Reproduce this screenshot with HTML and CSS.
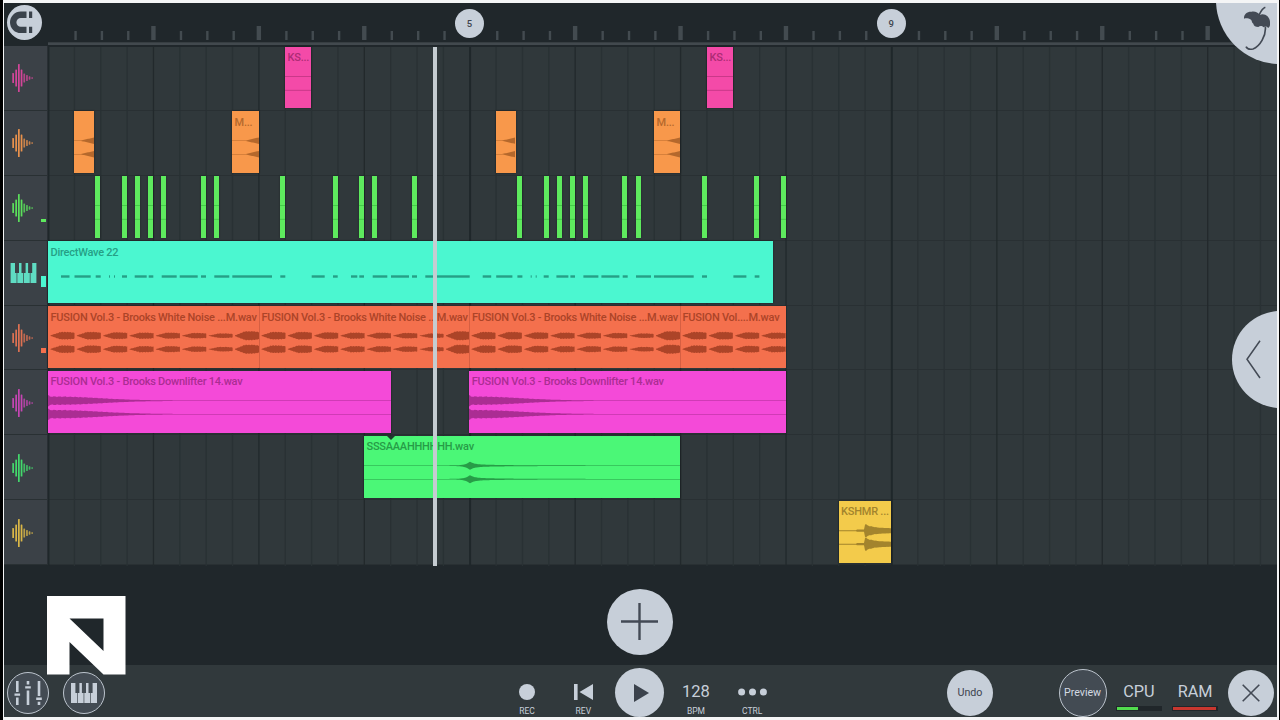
FILE: index.html
```html
<!DOCTYPE html>
<html lang="en">
<head>
    <meta charset="UTF-8">
    <meta name="viewport" content="width=device-width, initial-scale=1.0">
    <title>Playlist</title>
    <link rel="stylesheet" href="styles.css">
</head>
<body>
    <div class="app">
        <header class="ruler">
            <button class="round magnet">
                <svg width="35" height="35" viewBox="0 0 35 35">
                    <path d="M19.500 9.700H13.800A7.600 7.600 0 0 0 13.800 24.900H19.500" fill="none" stroke="#3a424b" stroke-width="6.400"/>
                    <path d="M22 6.500h3.200v6.400H22zM22 21.700h3.200v6.400H22z" fill="#3a424b"/>
                </svg>
            </button>
            <div class="timeline">
                <svg id="ticks" class="ticks"></svg>
                <span class="bar-number" style="left: 421.500px">5</span>
                <span class="bar-number" style="left: 843.300px">9</span>
            </div>
        </header>

        <main class="tracks" id="tracks">
            <svg id="grid" class="grid"></svg>
        </main>

        <section class="add-area">
            <button class="round add">
                <svg width="37" height="37" viewBox="0 0 37 37"><path d="M18.500 0v37M0 18.500h37" stroke="#434a55" stroke-width="2.400"/></svg>
            </button>
        </section>

        <footer class="toolbar">
            <div class="group left">
                <div class="cell">
                    <button class="round outline">
                        <svg width="28" height="26" viewBox="0 0 28 26" fill="#c7cfd9">
                            <path d="M2 1h2.600v11H2zM2 17.500h2.600V25H2zM.5 13.500h5.600v2.300H.5z"/>
                            <path d="M12.700 1h2.600v3.500h-2.600zM12.700 10.500h2.600V25h-2.600zM11.200 6.300h5.600v2.300h-5.600z"/>
                            <path d="M23.700 1h2.600v15h-2.600zM23.700 21.800h2.600V25h-2.600zM22.200 17.600h5.600v2.300h-5.600z"/>
                        </svg>
                    </button>
                </div>
                <div class="cell">
                    <button class="round outline">
                        <svg width="26" height="20" viewBox="0 0 26 20" fill="#c7cfd9"><path d="M0 0H4.400V10H6V20H0zM8.400 0H10.900V10H12.600V20H6.700V10H8.400zM15 0H17.500V10H19.200V20H13.300V10H15zM21.600 0H26V20H19.900V10H21.600z"/></svg>
                    </button>
                </div>
            </div>
            <div class="group center">
                <div class="cell labeled">
                    <div class="glyph"><svg width="16" height="16"><circle cx="8" cy="8" r="8" fill="#c7cfd9"/></svg></div>
                    <span>REC</span>
                </div>
                <div class="cell labeled">
                    <div class="glyph"><svg width="19" height="16" viewBox="0 0 19 16"><path d="M0 0h3.600v16H0zM19 0v16L5.500 8z" fill="#c7cfd9"/></svg></div>
                    <span>REV</span>
                </div>
                <div class="cell">
                    <button class="round play">
                        <svg width="15" height="18" viewBox="0 0 15 18"><path d="M0 0l15 9L0 18z" fill="#3b424c"/></svg>
                    </button>
                </div>
                <div class="cell labeled">
                    <div class="glyph tempo">128</div>
                    <span>BPM</span>
                </div>
                <div class="cell labeled">
                    <div class="glyph"><svg width="29" height="8" fill="#c7cfd9"><circle cx="3.600" cy="4" r="3.500"/><circle cx="14.500" cy="4" r="3.500"/><circle cx="25.400" cy="4" r="3.500"/></svg></div>
                    <span>CTRL</span>
                </div>
            </div>
            <div class="group right">
                <div class="cell"><button class="round undo">Undo</button></div>
                <div class="cell"></div>
                <div class="cell"><button class="round outline preview">Preview</button></div>
                <div class="cell load"><span>CPU</span><div class="meter cpu"><i></i></div></div>
                <div class="cell load"><span>RAM</span><div class="meter ram"><i></i></div></div>
                <div class="cell">
                    <button class="round close">
                        <svg width="18" height="18" viewBox="0 0 18 18"><path d="M.7 .7l16.600 16.600M17.300 .7L.7 17.300" stroke="#434a55" stroke-width="1.600"/></svg>
                    </button>
                </div>
            </div>
        </footer>

        <div class="corner">
            <svg width="27" height="45" viewBox="0 0 81 135">
                <path d="M3 38C2 25 12 16 26 17C36 15 46 20 50 27C64 20 82 32 81 50C82 58 80 63 76 66C72 60 65 60 62 64C56 58 50 60 46 63C38 62 32 60 31 53C25 50 28 44 24 41C16 36 8 36 3 38z" fill="#434a55"/>
                <path d="M48 27C54 15 58 7 67 4M67 62C70 90 50 122 30 129C20 131 12 129 9 122" fill="none" stroke="#434a55" stroke-width="5"/>
            </svg>
        </div>
        <div class="side-tab">
            <svg width="15" height="39" viewBox="0 0 15 39"><path d="M14 .7L1 19.300L14 38" fill="none" stroke="#434a55" stroke-width="1.500"/></svg>
        </div>
        <svg class="logo" width="79" height="79" viewBox="0 0 79 79">
            <path fill="#fff" fill-rule="evenodd" d="M0 0H78.500V78.500H56.500L22.500 46V78.500H0zM22.500 22.500H56.500V55z"/>
        </svg>
    </div>

    <script src="script.js"></script>
</body>
</html>
```
FILE: styles.css
```css
body {
    margin: 0;
    height: 720px;
    box-sizing: border-box;
    border-left: 3px solid #000;
    border-right: 1px solid #000;
    background-color: #f4f5f6;
    font-family: Roboto, "Liberation Sans", sans-serif;
    overflow: hidden;
}

.app {
    position: relative;
    width: 1273px;
    height: 714px;
    margin: 3px 0 0 1px;
    background-color: #20272b;
    display: flex;
    flex-direction: column;
    overflow: hidden;
}

.round {
    display: flex;
    align-items: center;
    justify-content: center;
    flex: none;
    padding: 0;
    border: 0;
    border-radius: 50%;
    box-sizing: border-box;
    background-color: #c7cfd9;
    color: #3d444e;
    font-family: inherit;
}

/* Ruler */
.ruler {
    display: flex;
    height: 43px;
    flex: none;
}

.magnet {
    width: 35px;
    height: 35px;
    margin: 2px 6px 0 3px;
}

.timeline {
    position: relative;
    flex: 1;
}

.ticks {
    display: block;
    width: 100%;
    height: 43px;
}

.bar-number {
    position: absolute;
    top: 6px;
    width: 29px;
    height: 29px;
    margin-left: -14.5px;
    border-radius: 50%;
    background-color: #c7cfd9;
    color: #3d444e;
    font-size: 9.5px;
    font-weight: 500;
    line-height: 29px;
    text-align: center;
}

/* Tracks */
.tracks {
    position: relative;
    flex: none;
    background-color: #30383b;
    box-shadow: inset 0 1px #20272b;
}

.grid {
    position: absolute;
    left: 44px;
    top: 1px;
    width: 1229px;
    height: 519px;
}

.track {
    display: flex;
    height: 64.9px;
    box-sizing: border-box;
    border-bottom: 1px solid #293033;
}

.track-head {
    position: relative;
    width: 44px;
    flex: none;
    box-sizing: border-box;
    padding: 1px 0 0 6px;
    border-right: 1px solid #292f34;
    background-color: #3b4147;
    background-clip: padding-box;
    display: flex;
    align-items: center;
}

.level {
    position: absolute;
    right: 1px;
    width: 5px;
}

.lane {
    position: relative;
    flex: 1;
}

.clip {
    position: absolute;
    top: 0.55px;
    height: 61.8px;
    overflow: hidden;
    box-shadow: 0 0 2px rgba(0, 0, 0, 0.4);
}

.clip svg {
    position: absolute;
    left: 0;
    top: 0;
}

.clip-name {
    display: block;
    padding: 4.4px 0 0 2.5px;
    font-size: 11px;
    font-weight: 500;
    letter-spacing: -0.24px;
    line-height: 13px;
    white-space: nowrap;
}

.pink { background-color: #f44aa8; color: #ad2c75; }
.orange { background-color: #f8984b; color: #b5682c; }
.lime { background-color: #5eea5e; color: #35b93b; }
.teal { background-color: #4bf7d0; color: #269f86; }
.coral { background-color: #f4704d; color: #ac4428; }
.magenta { background-color: #f44ad8; color: #ab2d93; }
.green { background-color: #4bf777; color: #279c47; }
.yellow { background-color: #f3cb4b; color: #a3842d; }

.coral + .coral {
    box-shadow: inset 1px 0 #d65f42;
}

.playhead {
    position: absolute;
    left: 428.5px;
    top: 1px;
    width: 4px;
    height: 519px;
    background-color: #c5ccd1;
}

.marker {
    position: absolute;
    left: 382.5px;
    top: 389.5px;
    border: 4px solid transparent;
    border-top-color: #1d3a2c;
    border-bottom: 0;
}

/* Add button */
.add-area {
    flex: 1;
    display: flex;
    justify-content: center;
    align-items: flex-start;
    padding-top: 23.6px;
    padding-right: 2px;
}

.add {
    width: 66px;
    height: 66px;
}

/* Toolbar */
.toolbar {
    display: flex;
    flex: none;
    height: 52px;
    background-color: #31393c;
}

.group {
    display: flex;
    height: 55px;
}

.left {
    margin-left: -4px;
}

.center {
    margin-left: 386.3px;
}

.right {
    margin-left: auto;
    margin-right: -2.6px;
}

.cell {
    width: 56.3px;
    display: flex;
    align-items: center;
    justify-content: center;
    flex: none;
}

.outline {
    width: 42px;
    height: 42px;
    border: 1.5px solid #bcc4cd;
    background-color: #434b53;
}

.play {
    width: 49px;
    height: 49px;
}

.play svg {
    margin-left: 3px;
}

.undo,
.close {
    width: 46px;
    height: 46px;
    font-size: 10.7px;
}

.preview {
    width: 48px;
    height: 48px;
    color: #d3dae2;
    font-size: 10.6px;
}

.labeled {
    flex-direction: column;
    justify-content: flex-start;
    color: #c7cfd9;
    font-size: 8.5px;
    line-height: 10px;
}

.glyph {
    height: 30px;
    padding-top: 12px;
    margin-bottom: -1.2px;
    display: flex;
    align-items: center;
}

.tempo {
    font-size: 16.5px;
}

.load {
    flex-direction: column;
    justify-content: flex-start;
    color: #c7cfd9;
    font-size: 16.3px;
    line-height: 20px;
}

.load span {
    margin: 16.6px 0 4px;
}

.meter {
    width: 44px;
    height: 3px;
    border: 1px solid #20262a;
    background-color: #20262a;
}

.meter i {
    display: block;
    height: 3px;
}

.cpu i { width: 21px; background-color: #52dc4e; }
.ram i { width: 43px; background-color: #c8372f; }

/* Overlays on the right edge */
.corner {
    position: absolute;
    right: -67px;
    top: -67px;
    width: 128px;
    height: 128px;
    border-radius: 50%;
    background-color: #c7cfd9;
}

.corner svg {
    position: absolute;
    left: 27px;
    top: 70px;
}

.side-tab {
    position: absolute;
    right: -51.5px;
    top: 308px;
    width: 97px;
    height: 97px;
    border-radius: 50%;
    background-color: #c7cfd9;
}

.side-tab svg {
    position: absolute;
    left: 14px;
    top: 29px;
}

.logo {
    position: absolute;
    left: 43px;
    top: 593px;
}
```
FILE: script.js
```js
var BEAT = 26.356;
var LOOP = BEAT * 16;

// Everything below is in pixels from the start of the song
function withRepeat(list, end) {
    return list.concat(list.map(function(n) {
        return [n[0] + LOOP, n[1]];
    })).filter(function(n) { return n[0] < end; });
}

// One closed shape around each of the two channel lines
function stereo(width, envelope) {
    return [29.7, 43.2].map(function(mid) {
        var top = [], bottom = [];
        for (var x = 0; x <= width; x++) {
            var h = envelope(x);
            top.push(x + ',' + (mid - h).toFixed(2));
            bottom.unshift(x + ',' + (mid + h).toFixed(2));
        }
        return '<polygon points="' + top.concat(bottom).join(' ') + '"/>';
    }).join('');
}

function line() {
    return 0.3;
}

function rough(x) {
    return 0.82 + 0.18 * Math.sin(x * 1.9) * Math.cos(x * 0.7);
}

function downlifter(x) {
    if (x < 2) return 5.5;
    return Math.max(0.3, 3.2 * rough(x) * Math.exp(-Math.pow(x / 62, 2.6)) + 1.5 * Math.exp(-Math.pow(x / 100, 2)));
}

function scream(x) {
    var d = x - 105.5;
    return 0.3 + (d < 0 ? 3.6 * Math.exp(d / 4) : 2.9 * Math.exp(-d / 4) + 1.2 * Math.exp(-d / 30));
}

function crash(x) {
    if (x < 26) return x < 18 ? 0.5 : 1.1;
    return 2.4 + 5 * rough(x) * Math.exp(-(x - 26) / 8);
}

function swell(width) {
    return function(x) {
        return x < width - 13 ? 0.3 : 0.3 + (x - width + 13) * 0.23;
    };
}

// White noise swells, one per beat
function blobs() {
    var sizes = [4, 4, 3.6, 3.3, 3.2, 2.9, 2.4, 4.8];
    return sizes.map(function(s, i) {
        var start = i * BEAT + 2.5;
        return [29.7, 43.2].map(function(mid) {
            var top = [], bottom = [];
            for (var x = 0; x <= 24; x++) {
                var h = s * Math.min(1, 0.08 + x / 11) * (x < 18 ? 1 : 1 - (x - 18) * 0.03) * (0.9 + 0.1 * Math.sin(x * 2.3 + i));
                top.push((start + x) + ',' + (mid - h).toFixed(2));
                bottom.unshift((start + x) + ',' + (mid + h).toFixed(2));
            }
            return '<polygon points="' + top.concat(bottom).join(' ') + '"/>';
        }).join('');
    }).join('');
}

var notes = withRepeat([
    [13, 8.5], [26.5, 16.2], [47.7, 5], [61, 1], [66, 1], [74, 5], [86.7, 12], [100.7, 4.6],
    [113.7, 15], [131.7, 18], [153, 5], [166.3, 15], [184.3, 39.7], [232.3, 5], [263.7, 13],
    [285, 4.7], [303, 6.3], [311.3, 4.7], [324.7, 14.6], [343, 18], [364, 5], [377.3, 44.4]
], 720).map(function(n) {
    return '<rect x="' + n[0] + '" y="34.3" width="' + n[1] + '" height="2.4"/>';
}).join('');

var hits = withRepeat([
    [47.3, 5], [74, 5], [87, 5], [100, 5], [113.2, 5], [152.7, 5], [166, 5], [232, 5],
    [284.8, 5], [311, 5], [324.3, 5], [364, 5]
], 735);

var noiseName = 'FUSION Vol.3 - Brooks White Noise ...M.wav';
var downName = 'FUSION Vol.3 - Brooks Downlifter 14.wav';

var tracks = [
    { color: 'pink', clips: [[237, 26.4, 'KS...'], [659, 26, 'KS...']], wave: line },
    { color: 'orange', clips: [[26, 20.3, ''], [184, 27, 'M...'], [448, 19.7, ''], [606, 26.4, 'M...']] },
    { color: 'lime', clips: hits.map(function(h) { return [h[0], h[1], '']; }), wave: line, level: [43, 3] },
    { color: 'teal', clips: [[0, 725, 'DirectWave 22']], shapes: notes, level: [35, 11] },
    { color: 'coral', clips: [[0, 211, noiseName], [211, 210.4, noiseName], [421.4, 210.6, noiseName], [632, 106, 'FUSION Vol....M.wav']], shapes: blobs(), level: [42, 5] },
    { color: 'magenta', clips: [[0, 343.3, downName], [421.3, 317, downName]], wave: downlifter },
    { color: 'green', clips: [[316, 316, 'SSSAAAHHHHHH.wav']], wave: scream },
    { color: 'yellow', clips: [[790.6, 52.7, 'KSHMR ...']], wave: crash }
];

var iconColors = {
    pink: '#d4459a', orange: '#e8914c', lime: '#5be05b', coral: '#df7152',
    magenta: '#c645b3', green: '#43d96c', yellow: '#d9b647'
};

function waveIcon(color) {
    var bars = [[3, 10], [6, 17], [8.7, 28], [11.4, 17], [14.1, 9], [16.8, 6], [19.4, 3.4], [22, 1.5]];
    return '<svg width="27" height="30" viewBox="0 0 27 30" fill="' + color + '">' + bars.map(function(b, i) {
        return '<rect x="' + (b[0] - 0.7) + '" y="' + (15 - b[1] / 2) + '" width="1.7" height="' + b[1] +
            '" rx=".6" opacity="' + (i < 4 ? 1 : 0.8) + '"/>';
    }).join('') + '</svg>';
}

function pianoIcon() {
    return '<svg width="27" height="20" viewBox="0 0 27 20" fill="#5fdcc3"><path d="M.6 0H5V10H6.600V20H.6zM9 0H11.500V10H13.200V20H7.300V10H9zM15.600 0H18.100V10H19.800V20H13.900V10H15.600zM22.200 0H26.400V20H20.500V10H22.200z"/></svg>';
}

var container = document.getElementById('tracks');

tracks.forEach(function(track) {
    var row = document.createElement('div');
    row.className = 'track';

    var level = track.level
        ? '<span class="level ' + track.color + '" style="top: ' + track.level[0] + 'px; height: ' + track.level[1] + 'px"></span>'
        : '';
    var icon = track.color === 'teal' ? pianoIcon() : waveIcon(iconColors[track.color]);

    var clips = track.clips.map(function(clip) {
        var shapes = track.shapes || stereo(clip[1], track.wave || swell(clip[1]));
        return '<div class="clip ' + track.color + '" style="left: ' + clip[0] + 'px; width: ' + clip[1] + 'px">' +
            '<svg width="' + clip[1] + '" height="62" fill="currentColor">' + shapes + '</svg>' +
            '<span class="clip-name">' + clip[2] + '</span></div>';
    }).join('');

    row.innerHTML = '<div class="track-head">' + icon + level + '</div><div class="lane">' + clips + '</div>';
    container.appendChild(row);
});

container.insertAdjacentHTML('beforeend', '<div class="marker"></div><div class="playhead"></div>');

// Beat lines and ruler ticks
var lines = '';
var ticks = '<rect x="0" y="39.3" width="1229" height="2.7" fill="#42494e"/>';
for (var i = 0; i < 47; i++) {
    var x = i * BEAT;
    var bar = i % 4 === 0;
    var strong = i % 16 === 0;
    lines += '<rect x="' + (x - 0.6) + '" y="0" width="' + (strong ? 2 : 1.3) + '" height="519" fill="' +
        (strong ? '#1f272a' : bar ? '#22292c' : '#293134') + '"/>';
    if (i > 0 && !strong) {
        ticks += bar
            ? '<rect x="' + (x - 2.2) + '" y="23" width="4.4" height="14" fill="#434b50"/>'
            : '<rect x="' + x + '" y="28" width="2.4" height="9" fill="#434b50"/>';
    }
}
document.getElementById('grid').innerHTML = lines;
document.getElementById('ticks').innerHTML = ticks;
```
